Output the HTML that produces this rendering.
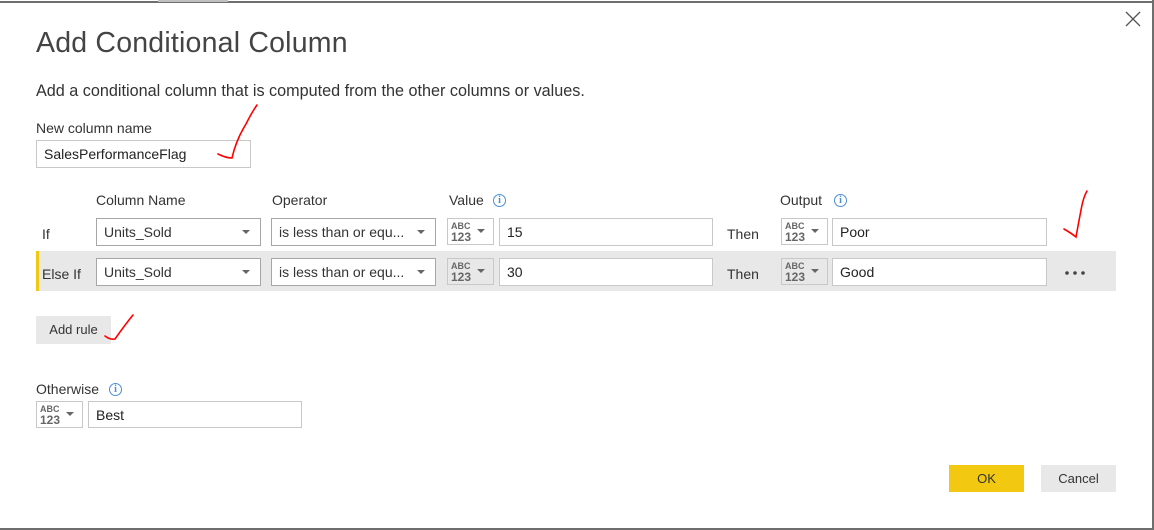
<!DOCTYPE html>
<html><head><meta charset="utf-8"><style>
*{box-sizing:border-box;margin:0;padding:0}
body{width:1154px;height:530px;background:#fff;position:relative;overflow:hidden;font-family:"Liberation Sans",sans-serif;color:#333}
.a{position:absolute}
.t{position:absolute;white-space:nowrap}
.in{position:absolute;border:1px solid #c8c8c8;background:#fff;font-size:14px;color:#222;padding-left:9px;display:flex;align-items:center}
.sel{position:absolute;border:1px solid #a6a6a6;background:#fff;font-size:14px;color:#333;padding-left:7px;display:flex;align-items:center}
.sel:after,.ty:after{content:"";position:absolute;right:10px;top:11px;border-left:4px solid transparent;border-right:4px solid transparent;border-top:4px solid #666}
.ty{position:absolute;border:1px solid #c8c8c8;background:#fff;width:47px;height:27px}
.ty b{position:absolute;left:3px;top:3px;font-size:9px;line-height:9px;color:#666;font-weight:bold}
.ty i{position:absolute;left:3px;top:12px;font-size:12px;line-height:12px;color:#666;font-weight:bold;font-style:normal}
.ty:after{top:10px;right:8px}
.info{position:absolute;width:13px;height:13px;border:1px solid #4a8fd6;border-radius:50%;color:#4a8fd6;font-size:10px;font-weight:bold;text-align:center;line-height:11px;font-family:"Liberation Serif",serif}
</style></head><body>
<div class="a" style="left:0;top:1px;width:1154px;height:2px;background:#6e6e6e"></div>
<div class="a" style="left:158px;top:0;width:70px;height:2px;background:#c0c0c0"></div>
<div class="a" style="left:1152px;top:0;width:2px;height:530px;background:#6e6e6e"></div>
<div class="a" style="left:0;top:528px;width:1154px;height:2px;background:#6e6e6e"></div>
<svg class="a" style="left:1125px;top:11px" width="16" height="16"><path d="M1 1L15 15M15 1L1 15" stroke="#555" stroke-width="1.3"/></svg>

<div class="t" style="left:36px;top:27px;font-size:28.5px;color:#444;letter-spacing:0.2px">Add Conditional Column</div>
<div class="t" style="left:36px;top:82px;font-size:16.2px">Add a conditional column that is computed from the other columns or values.</div>
<div class="t" style="left:36px;top:120px;font-size:14px">New column name</div>
<div class="in" style="left:36px;top:140px;width:215px;height:28px;padding-left:7px">SalesPerformanceFlag</div>

<div class="t" style="left:96px;top:192px;font-size:14px">Column Name</div>
<div class="t" style="left:272px;top:192px;font-size:14px">Operator</div>
<div class="t" style="left:449px;top:192px;font-size:14px">Value</div>
<div class="info" style="left:493px;top:194px">i</div>
<div class="t" style="left:780px;top:192px;font-size:14px">Output</div>
<div class="info" style="left:834px;top:194px">i</div>

<div class="t" style="left:42px;top:226px;font-size:14px">If</div>
<div class="sel" style="left:96px;top:218px;width:165px;height:28px">Units_Sold</div>
<div class="sel" style="left:271px;top:218px;width:165px;height:28px">is less than or equ...</div>
<div class="ty" style="left:447px;top:218px"><b>ABC</b><i>123</i></div>
<div class="in" style="left:499px;top:218px;width:214px;height:28px;padding-left:7px">15</div>
<div class="t" style="left:727px;top:226px;font-size:14px">Then</div>
<div class="ty" style="left:781px;top:218px"><b>ABC</b><i>123</i></div>
<div class="in" style="left:832px;top:218px;width:215px;height:28px;padding-left:7px">Poor</div>

<div class="a" style="left:36px;top:251px;width:1080px;height:40px;background:#e8e8e8;border-left:3px solid #f2c811"></div>
<div class="t" style="left:42px;top:266px;font-size:14px">Else If</div>
<div class="sel" style="left:96px;top:258px;width:165px;height:28px">Units_Sold</div>
<div class="sel" style="left:271px;top:258px;width:165px;height:28px">is less than or equ...</div>
<div class="ty" style="left:447px;top:258px;background:#e8e8e8"><b>ABC</b><i>123</i></div>
<div class="in" style="left:499px;top:258px;width:214px;height:28px;padding-left:7px">30</div>
<div class="t" style="left:727px;top:266px;font-size:14px">Then</div>
<div class="ty" style="left:781px;top:258px;background:#e8e8e8"><b>ABC</b><i>123</i></div>
<div class="in" style="left:832px;top:258px;width:215px;height:28px;padding-left:7px">Good</div>
<svg class="a" style="left:1064px;top:269px" width="24" height="8"><circle cx="3" cy="4" r="1.8" fill="#444"/><circle cx="11" cy="4" r="1.8" fill="#444"/><circle cx="19" cy="4" r="1.8" fill="#444"/></svg>

<div class="a" style="left:36px;top:316px;width:75px;height:28px;background:#e8e8e8;font-size:13px;text-align:center;line-height:28px">Add rule</div>

<div class="t" style="left:36px;top:381px;font-size:14px">Otherwise</div>
<div class="info" style="left:109px;top:383px">i</div>
<div class="ty" style="left:36px;top:401px"><b>ABC</b><i>123</i></div>
<div class="in" style="left:88px;top:401px;width:214px;height:27px;padding-left:7px">Best</div>

<div class="a" style="left:949px;top:465px;width:75px;height:27px;background:#f2c811;font-size:13px;text-align:center;line-height:27px">OK</div>
<div class="a" style="left:1041px;top:465px;width:75px;height:27px;background:#e8e8e8;font-size:13px;text-align:center;line-height:27px">Cancel</div>

<svg class="a" style="left:0;top:0" width="1154" height="530">
<g fill="none" stroke="#f00" stroke-width="1.6" stroke-linecap="round">
<path d="M218 154Q226 158 232 158Q236 140 246 124Q252 112 257 105"/>
<path d="M1064 229Q1071 233 1076 237Q1080 215 1082 205Q1084 196 1087 191"/>
<path d="M105 336Q110 340 115 339Q124 326 133 315"/>
</g></svg>
</body></html>
